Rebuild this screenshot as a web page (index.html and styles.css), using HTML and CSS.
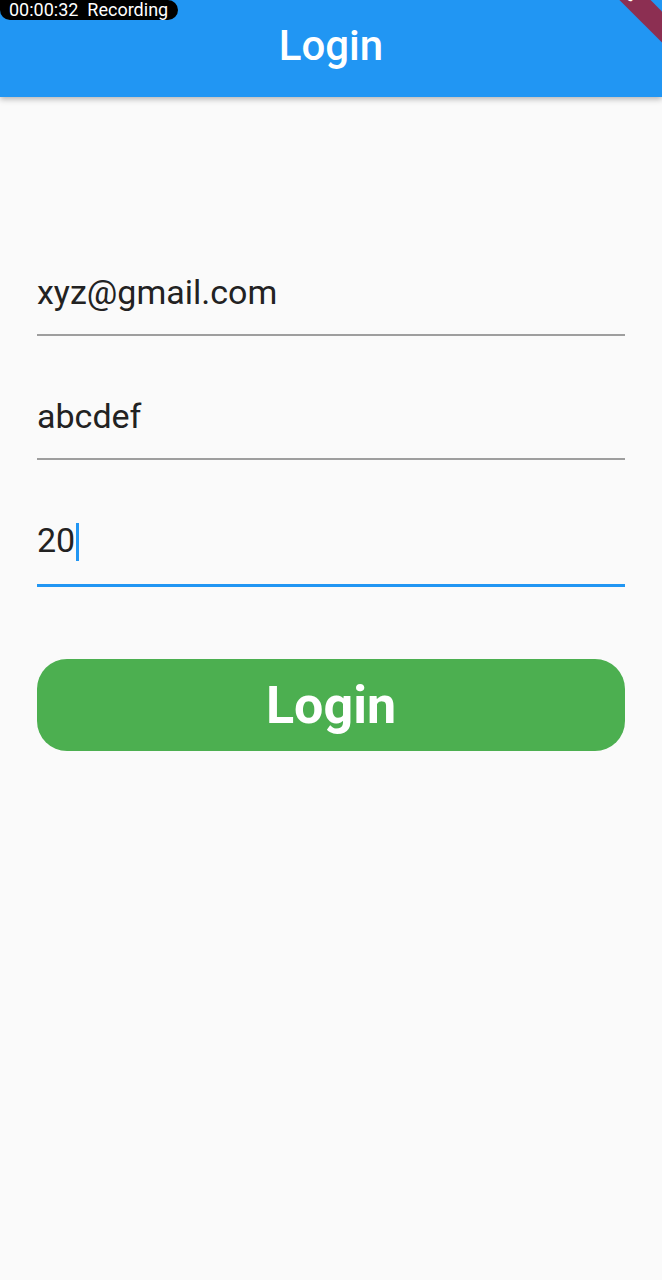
FILE: index.html
```html
<!DOCTYPE html>
<html lang="en">
<head>
<meta charset="UTF-8">
<meta name="viewport" content="width=device-width, initial-scale=1.0">
<title>Login</title>
<link rel="stylesheet" href="styles.css">
</head>
<body>

<div class="recording">00:00:32&nbsp;&nbsp;Recording</div>

<div class="debug-corner">
  <div class="debug-band"><span>DEBUG</span></div>
</div>

<header class="app-bar">
  <h1>Login</h1>
</header>

<form class="login-form" onsubmit="return false">
  <div class="field">
    <div class="field-value">xyz@gmail.com</div>
  </div>
  <div class="field">
    <div class="field-value">abcdef</div>
  </div>
  <div class="field focused">
    <div class="field-value">20<span class="caret"></span></div>
  </div>
  <button type="submit" class="login-btn">Login</button>
</form>

</body>
</html>
```

FILE: styles.css
```css
* {
  margin: 0;
  padding: 0;
  box-sizing: border-box;
  font-family: Roboto, 'Noto Sans', sans-serif;
}

body {
  background: #fafafa;
  color: #222;
  min-height: 100vh;
}

.recording {
  position: absolute;
  top: 0;
  left: 0;
  z-index: 10;
  background: #000;
  color: #fff;
  font-size: 18px;
  line-height: 20px;
  padding: 0 10px 0 9px;
  border-radius: 0 10px 10px 10px;
  white-space: nowrap;
}

.debug-corner {
  position: absolute;
  top: 0;
  right: 0;
  width: 80px;
  height: 60px;
  overflow: hidden;
  z-index: 10;
  pointer-events: none;
}

.debug-band {
  position: absolute;
  left: -66px;
  top: -30px;
  width: 200px;
  height: 22px;
  background: #8c2f52;
  transform: rotate(45deg);
  text-align: right;
  padding-right: 74px;
  color: #fff;
  font-size: 16px;
  font-weight: bold;
  line-height: 22px;
}

.app-bar {
  height: 97px;
  background: #2196f3;
  display: flex;
  align-items: center;
  justify-content: center;
  padding-bottom: 6px;
  box-shadow: 0 2px 6px rgba(0, 0, 0, 0.3);
}

.app-bar h1 {
  color: #fff;
  font-size: 42px;
  font-weight: 500;
}

.login-form {
  padding: 115px 37px 0;
  display: flex;
  flex-direction: column;
}

.field {
  padding: 60px 0 22px;
  border-bottom: 2px solid #9e9e9e;
}

.field.focused {
  padding-bottom: 23px;
  border-bottom: 3px solid #2196f3;
}

.field-value {
  font-size: 34px;
  line-height: 40px;
  color: #222;
}

.caret {
  display: inline-block;
  width: 3px;
  height: 38px;
  background: #2196f3;
  vertical-align: -9px;
  margin-left: 1px;
}

.login-btn {
  margin-top: 72px;
  height: 92px;
  border: none;
  border-radius: 30px;
  background: #4caf50;
  color: #fff;
  font-size: 52px;
  font-weight: bold;
  cursor: pointer;
}
```
